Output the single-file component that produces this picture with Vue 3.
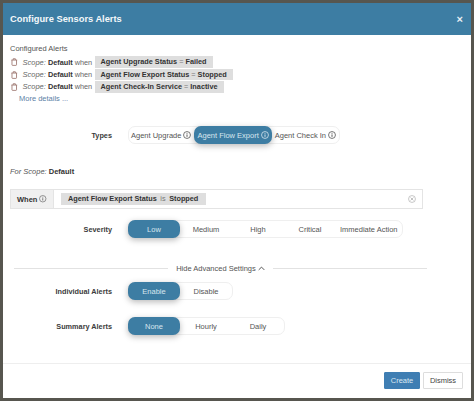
<script setup>
const alerts = [
  { name: 'Agent Upgrade Status', op: '=', value: 'Failed' },
  { name: 'Agent Flow Export Status', op: '=', value: 'Stopped' },
  { name: 'Agent Check-In Service', op: '=', value: 'Inactive' }
]
const types = [
  { label: 'Agent Upgrade', active: false },
  { label: 'Agent Flow Export', active: true },
  { label: 'Agent Check In', active: false }
]
const severity = ['Low', 'Medium', 'High', 'Critical', 'Immediate Action']
</script>

<template>
  <div class="page">
    <div class="modal">
      <header class="head">
        <h1>Configure Sensors Alerts</h1>
        <span class="close">×</span>
      </header>
      <main class="body">
        <section class="configured">
          <div class="cfg-title">Configured Alerts</div>
          <div v-for="a in alerts" :key="a.name" class="alert-row">
            <svg class="trash" viewBox="0 0 10 12" width="6.500" height="8">
              <path d="M1.500 3.200v7a1 1 0 0 0 1 1h5a1 1 0 0 0 1-1v-7M.5 3h9M3.300 2.800V1h3.400v1.800" fill="none" stroke="#8a5a52" stroke-width="1.100" />
            </svg>
            <span class="scope"><i>Scope:</i> <b>Default</b> when</span>
            <span class="chip"><b>{{ a.name }}</b> <span class="op">{{ a.op }}</span> <b>{{ a.value }}</b></span>
          </div>
          <a class="more">More details ...</a>
        </section>

        <div class="row types-row">
          <label class="lab">Types</label>
          <div class="seg types">
            <span v-for="t in types" :key="t.label" class="opt" :class="{ on: t.active }">
              {{ t.label }}
              <svg class="info" viewBox="0 0 10 10" width="8" height="8">
                <circle cx="5" cy="5" r="4.300" fill="none" stroke="currentColor" stroke-width="1" />
                <path d="M5 4.300v3M5 2.400v1" stroke="currentColor" stroke-width="1.200" />
              </svg>
            </span>
          </div>
        </div>

        <div class="for-scope"><i>For Scope:</i> <b>Default</b></div>

        <div class="when">
          <div class="when-lab">
            <b>When</b>
            <svg class="info" viewBox="0 0 10 10" width="7.500" height="7.500">
              <circle cx="5" cy="5" r="4.300" fill="none" stroke="currentColor" stroke-width=".8" />
              <path d="M5 4.300v3M5 2.400v1" stroke="currentColor" stroke-width="1" />
            </svg>
          </div>
          <div class="when-val">
            <span class="chip big"><b>Agent Flow Export Status</b> <span class="op">is</span> <b>Stopped</b></span>
            <svg class="clear" viewBox="0 0 10 10" width="8" height="8">
              <circle cx="5" cy="5" r="4.300" fill="none" stroke="#a8a8a8" stroke-width=".8" />
              <path d="M3.200 3.200l3.600 3.600M6.800 3.200l-3.600 3.600" stroke="#a8a8a8" stroke-width=".9" />
            </svg>
          </div>
        </div>

        <div class="row sev-row">
          <label class="lab">Severity</label>
          <div class="seg">
            <span v-for="(s, i) in severity" :key="s" class="opt wide" :class="{ on: i === 0 }">{{ s }}</span>
          </div>
        </div>

        <div class="divider">
          <span class="line"></span>
          <span class="adv">Hide Advanced Settings
            <svg viewBox="0 0 10 6" width="7" height="5">
              <path d="M1 5l4-4 4 4" fill="none" stroke="#444" stroke-width="1.300" />
            </svg>
          </span>
          <span class="line"></span>
        </div>

        <div class="row ind-row">
          <label class="lab">Individual Alerts</label>
          <div class="seg">
            <span class="opt wide on">Enable</span>
            <span class="opt wide">Disable</span>
          </div>
        </div>

        <div class="row sum-row">
          <label class="lab">Summary Alerts</label>
          <div class="seg">
            <span class="opt wide on">None</span>
            <span class="opt wide">Hourly</span>
            <span class="opt wide">Daily</span>
          </div>
        </div>
      </main>
      <footer class="foot">
        <button class="btn primary">Create</button>
        <button class="btn">Dismiss</button>
      </footer>
    </div>
  </div>
</template>

<style>
html, body { margin: 0; background: #555; }
</style>

<style scoped>
.page {
  width: 474px;
  height: 401px;
  box-sizing: border-box;
  padding: 3px;
  background: #57564f;
  font-family: "Liberation Sans", Arial, sans-serif;
  overflow: hidden;
  color: #444;
}
.modal {
  height: 395px;
  background: #fff;
  display: flex;
  flex-direction: column;
}
.head {
  height: 32px;
  flex: none;
  background: #3d7da3;
  color: #fff;
  display: flex;
  align-items: center;
  justify-content: space-between;
  padding: 0 8px 0 7px;
}
h1 { margin: 0; font-size: 9.300px; font-weight: 700; color: #f4f8fa; }
.close { font-size: 11px; font-weight: 700; color: #e8f0f4; line-height: 1; }
.body { flex: 1; font-size: 7.500px; }
.configured { padding: 9px 7px 0; }
.cfg-title { font-size: 7.500px; line-height: 10px; color: #555; margin-bottom: 2px; }
.alert-row {
  height: 12.400px;
  display: flex;
  align-items: center;
}
.trash { flex: none; margin: 0 5px 0 1px; }
.scope { color: #666; width: 72px; flex: none; white-space: nowrap; font-size: 7.300px; }
.scope i { font-size: 7.500px; }
.scope b { color: #333; }
.chip {
  background: #dedede;
  padding: 0 6px;
  line-height: 11.500px;
  color: #333;
  white-space: nowrap;
  font-size: 7.300px;
}
.op { color: #777; }
.more { display: block; margin: 0 0 0 9px; color: #5c82a6; line-height: 11px; }

.row { display: flex; align-items: center; }
.lab {
  width: 109px;
  flex: none;
  text-align: right;
  margin-right: 16px;
  font-weight: 700;
  color: #3b3b3b;
  font-size: 7.300px;
}
.seg {
  display: inline-flex;
  height: 18px;
  border: 1px solid #efefef;
  border-radius: 7px;
  box-sizing: border-box;
}
.opt {
  display: flex;
  align-items: center;
  justify-content: center;
  gap: 2px;
  white-space: nowrap;
  color: #555;
  font-size: 7.500px;
  border-radius: 7px;
  margin: -1px 0;
}
.opt:first-child { margin-left: -1px; }
.opt.wide { min-width: 52px; }
.opt.wide:nth-child(5) { padding: 0 4px; }
.opt.on {
  background: #3d7da3;
  color: #d8e6ee;
  box-shadow: 0 2px 6px rgba(0, 0, 0, .28);
}
.types-row { margin-top: 22px; }
.types .opt { padding: 0 3px; }
.for-scope { margin: 23px 0 0 7px; line-height: 10px; color: #555; }
.for-scope b { color: #333; }

.when {
  margin: 12px 0 0 7px;
  width: 413px;
  height: 20px;
  display: flex;
  border: 1px solid #e4e4e4;
  box-sizing: border-box;
}
.when-lab {
  width: 43px;
  flex: none;
  background: #f0f0f0;
  border-right: 1px solid #e4e4e4;
  display: flex;
  align-items: center;
  justify-content: center;
  gap: 2px;
  box-sizing: border-box;
  color: #555;
}
.when-lab b { color: #333; }
.when-val {
  flex: 1;
  display: flex;
  align-items: center;
  justify-content: space-between;
  padding: 0 6px 0 7px;
}
.chip.big { line-height: 12px; padding: 0 8px 0 7px; }
.chip.big .op { margin: 0 1.500px; }
.sev-row { margin-top: 11px; }
.divider {
  margin: 20px 0 0 11px;
  width: 413px;
  display: flex;
  align-items: center;
  gap: 8px;
  height: 20px;
}
.line { flex: 1; height: 1px; background: #e2e2e2; }
.adv { color: #555; white-space: nowrap; }
.ind-row { margin-top: 4px; }
.sum-row { margin-top: 17px; }

.foot {
  height: 35px;
  flex: none;
  border-top: 1px solid #eee;
  display: flex;
  justify-content: flex-end;
  align-items: flex-start;
  gap: 3px;
  padding: 8px 8px 0 0;
  box-sizing: border-box;
}
.btn {
  height: 17px;
  width: 40px;
  padding: 0;
  border: 1px solid #ddd;
  border-radius: 1px;
  background: #fff;
  color: #444;
  font: 7.500px "Liberation Sans", Arial, sans-serif;
}
.btn.primary {
  width: 36px;
  background: #3f7eb3;
  border-color: #3f7eb3;
  color: #dce9f2;
}
</style>
